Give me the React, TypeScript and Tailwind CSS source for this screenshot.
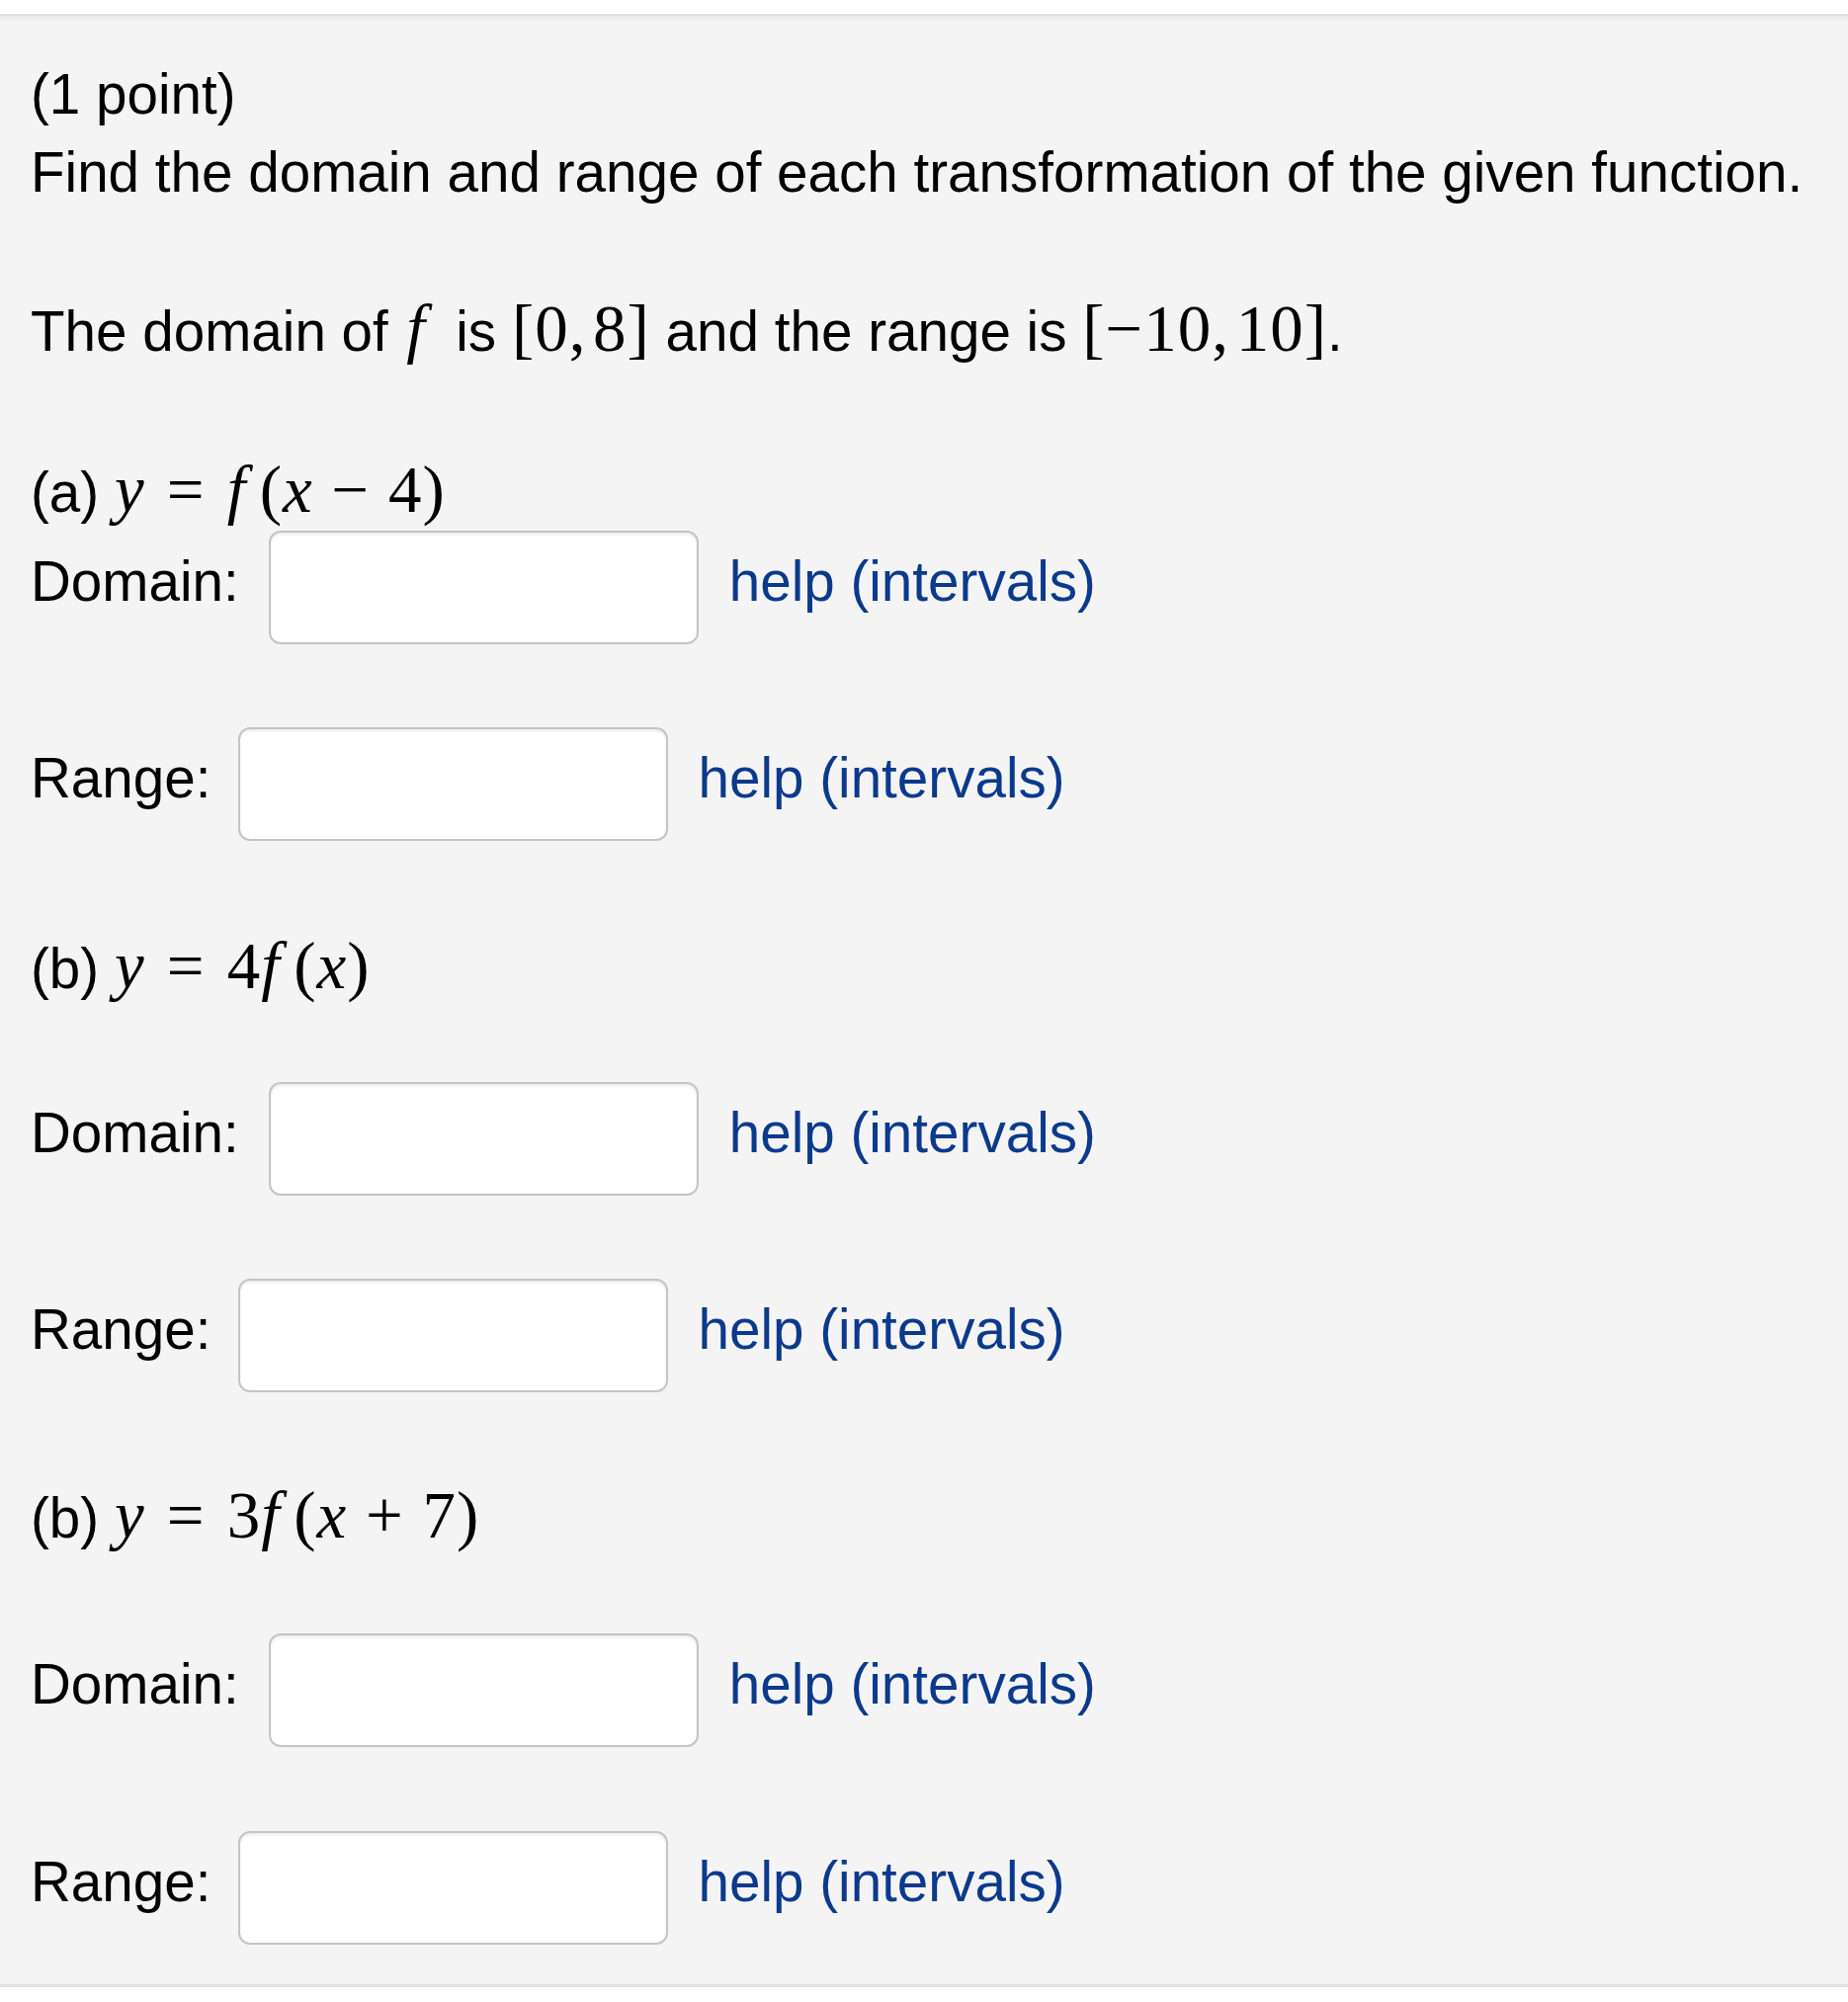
import React from 'react';

// Math glyphs are set in a serif face, the prose in an Arial-width sans.
function V({ children }: { children: React.ReactNode }) {
  return <span className="italic">{children}</span>;
}

// italic f with room for its overhang before the next glyph
function F({ wide }: { wide?: boolean }) {
  return <span className={`italic ${wide ? 'ml-[0.04em] mr-[0.22em]' : 'mr-[0.2em]'}`}>f</span>;
}

function Rel({ children }: { children: React.ReactNode }) {
  return <span className="mx-[0.33em]">{children}</span>;
}

function Bin({ children }: { children: React.ReactNode }) {
  return <span className="mx-[0.28em]">{children}</span>;
}

function M({ children }: { children: React.ReactNode }) {
  return (
    <span className="font-['Liberation_Serif','Times_New_Roman',serif] text-[67px] tracking-[0.015em]">
      {children}
    </span>
  );
}

interface AnswerRowProps {
  label: string;
  gap: 'domain' | 'range';
}

function AnswerRow({ label, gap }: AnswerRowProps) {
  return (
    <div className="flex items-start h-[115px]">
      <span className="pt-[12px] leading-[79px]">{label}</span>
      <input
        type="text"
        aria-label={label}
        className={`${gap === 'domain' ? 'ml-[30px]' : 'ml-[27px]'} w-[435px] h-[115px] shrink-0 rounded-[12px] border-2 border-[#c4c4c4] bg-white shadow-[inset_0_2px_3px_rgba(0,0,0,0.08)] outline-none`}
      />
      <a href="#" className="ml-[31px] pt-[12px] leading-[79px] text-[#0b3a8d] no-underline">
        help (intervals)
      </a>
    </div>
  );
}

export default function App() {
  return (
    <div className="min-h-[2026px] bg-white pt-[14px] font-['Liberation_Sans',Arial,sans-serif] text-[56.6px] text-black">
      <div className="border-t-2 border-b-[3px] border-[#e1e1e1] bg-[#f4f4f4] pl-[31px] pt-[40px] pb-[40px] shadow-[inset_0_5px_5px_-3px_rgba(0,0,0,0.06)]">
        <div className="leading-[79px]">(1 point)</div>
        <div className="leading-[79px]">Find the domain and range of each transformation of the given function.</div>

        <div className="mt-[79px] h-[79px] leading-[79px]">
          The domain of <M><F wide /></M> is <M>[0,&#8202;8]</M> and the range is <M>[−10,&#8202;10]</M>.
        </div>

        {/* (a) */}
        <div className="mt-[84px] h-[79px] leading-[79px]">
          (a) <M><V>y</V><Rel>=</Rel><F />(<V>x</V><Bin>−</Bin>4)</M>
        </div>
        <div className="mt-[2px]">
          <AnswerRow label="Domain:" gap="domain" />
        </div>
        <div className="mt-[84px]">
          <AnswerRow label="Range:" gap="range" />
        </div>

        {/* (b) */}
        <div className="mt-[87px] h-[79px] leading-[79px]">
          (b) <M><V>y</V><Rel>=</Rel>4<F />(<V>x</V>)</M>
        </div>
        <div className="mt-[78px]">
          <AnswerRow label="Domain:" gap="domain" />
        </div>
        <div className="mt-[84px]">
          <AnswerRow label="Range:" gap="range" />
        </div>

        {/* (b) again, as in the source */}
        <div className="mt-[85px] h-[79px] leading-[79px]">
          (b) <M><V>y</V><Rel>=</Rel>3<F />(<V>x</V><Bin>+</Bin>7)</M>
        </div>
        <div className="mt-[80px]">
          <AnswerRow label="Domain:" gap="domain" />
        </div>
        <div className="mt-[85px]">
          <AnswerRow label="Range:" gap="range" />
        </div>
      </div>
    </div>
  );
}
